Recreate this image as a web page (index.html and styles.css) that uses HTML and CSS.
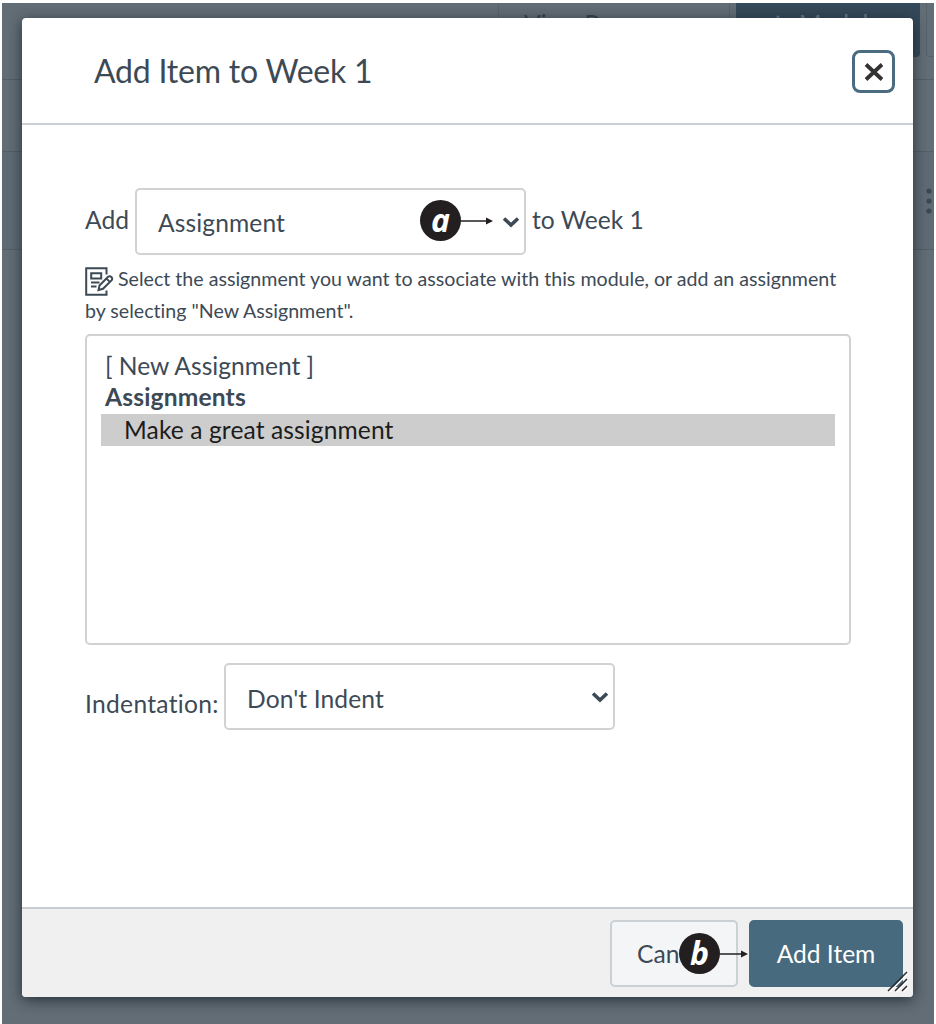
FILE: index.html
```html
<!DOCTYPE html>
<html lang="en">
<head>
    <meta charset="UTF-8">
    <meta name="viewport" content="width=device-width, initial-scale=1.0">
    <title>Add Item to Week 1</title>
    <link rel="stylesheet" href="styles.css">
</head>
<body>
    <div class="page">
        <div class="toolbar">
            <div class="page-btn view-btn">View Progress</div>
            <div class="page-btn module-btn"><span class="plus">+</span><span>Module</span></div>
            <div class="page-btn more-btn"></div>
        </div>
        <div class="page-gap"></div>
        <div class="module-row">
            <svg class="kebab" width="6" height="28" viewBox="0 0 6 28">
                <circle cx="3" cy="4" r="2.6"/>
                <circle cx="3" cy="14" r="2.6"/>
                <circle cx="3" cy="24" r="2.6"/>
            </svg>
        </div>
    </div>

    <div class="dialog" role="dialog">
        <div class="dialog-header">
            <h1>Add Item to Week 1</h1>
            <button type="button" class="close-btn" aria-label="Close">
                <svg width="20" height="20" viewBox="0 0 20 20">
                    <path d="M2 2.5 L18 17.5 M18 2.5 L2 17.5"/>
                </svg>
            </button>
        </div>

        <form class="dialog-body">
            <div class="type-row">
                <label for="item-type">Add</label>
                <div class="select-wrap">
                    <select id="item-type">
                        <option>Assignment</option>
                    </select>
                    <svg class="chevron" width="18" height="12" viewBox="0 0 18 12"><path d="M2 2.5 L9 9 L16 2.5"/></svg>
                    <div class="marker marker-a">
                        <span class="marker-dot">a</span>
                        <svg width="32" height="8" viewBox="0 0 32 8"><path d="M0 4 H26" stroke="#231f20" stroke-width="1.5"/><path d="M25 0.5 L32 4 L25 7.5 Z" fill="#231f20"/></svg>
                    </div>
                </div>
                <span class="type-suffix">to Week 1</span>
            </div>

            <p class="hint"><svg class="hint-icon" width="29" height="29" viewBox="0 0 29 29"><path d="M21.5 7.5 V1.2 H1.2 V27.8 H21.5 V23.5"/><path d="M6.2 6.2 H16.2 V11.6 H6.2 Z"/><path d="M6 15.5 H14.5 M6 19.5 H11.5"/><path d="M14.5 18.5 L23.3 9.6 Q25 8.6 26.4 10 Q27.8 11.4 26.7 13.1 L18 21.8 L13.5 23 Z M21.5 11.6 L24.8 14.9"/></svg>Select the assignment you want to associate with this module, or add an assignment<br>by selecting "New Assignment".</p>

            <ul class="item-list">
                <li>[ New Assignment ]</li>
                <li class="group">Assignments</li>
                <li class="selected">Make a great assignment</li>
            </ul>

            <div class="indent-row">
                <label for="indent">Indentation:</label>
                <div class="select-wrap">
                    <select id="indent">
                        <option>Don't Indent</option>
                    </select>
                    <svg class="chevron" width="18" height="12" viewBox="0 0 18 12"><path d="M2 2.5 L9 9 L16 2.5"/></svg>
                </div>
            </div>
        </form>

        <div class="dialog-footer">
            <button type="button" class="btn cancel-btn">Cancel</button>
            <button type="button" class="btn add-btn">Add Item</button>
            <div class="marker marker-b">
                <span class="marker-dot">b</span>
                <svg width="28" height="8" viewBox="0 0 28 8"><path d="M0 4 H22" stroke="#231f20" stroke-width="1.5"/><path d="M21 0.5 L28 4 L21 7.5 Z" fill="#231f20"/></svg>
            </div>
            <svg class="resize-handle" width="22" height="22" viewBox="0 0 22 22">
                <g stroke="#fff" transform="translate(1.2 1.2)"><path d="M1 20 L20 1 M8 20 L20 8 M15 20 L20 15"/></g>
                <g stroke="#2b2b2b"><path d="M1 20 L20 1 M8 20 L20 8 M15 20 L20 15"/></g>
            </svg>
        </div>
    </div>
</body>
</html>
```

FILE: styles.css
```css
* {
    box-sizing: border-box;
}

body {
    margin: 0;
    height: 1024px;
    overflow: hidden;
    background: #fff;
    font-family: Lato, sans-serif;
    font-size: 24.6px;
    font-variant-ligatures: none;
    color: #3d4a56;
}

/* dimmed page behind the dialog */
.page {
    height: 1021px;
    margin: 3px 2px 0;
    background: #626d76;
    overflow: hidden;
}

.toolbar {
    display: flex;
    justify-content: flex-end;
    gap: 6px;
    height: 77px;
    border-bottom: 1px solid #525e68;
}

.page-btn {
    height: 54px;
    padding-top: 6px;
    border: 1px solid #56626c;
    border-top: none;
    border-radius: 0 0 4px 4px;
    line-height: 30px;
    color: #35424d;
}

.view-btn {
    width: 232px;
    padding-left: 25px;
}

.module-btn {
    display: flex;
    align-items: flex-start;
    width: 184px;
    padding-left: 31px;
    background: #34495a;
    border-color: #34495a;
    color: #6e7c88;
}

.plus {
    margin-right: 11px;
    font-size: 34px;
    line-height: 28px;
}

.more-btn {
    width: 8px;
    border-right: none;
    border-radius: 0 0 0 4px;
}

.page-gap {
    height: 71px;
}

.module-row {
    display: flex;
    align-items: center;
    justify-content: flex-end;
    height: 99px;
    padding-right: 2px;
    border-top: 1px solid #525e68;
    border-bottom: 1px solid #525e68;
    background: #5f6b74;
}

.kebab {
    fill: #3b4853;
}

.dialog {
    position: absolute;
    top: 18px;
    left: 22px;
    display: flex;
    flex-direction: column;
    width: 891px;
    height: 979px;
    border-radius: 4px;
    background: #fff;
    box-shadow: 0 3px 14px rgba(20, 30, 38, 0.75);
}

.dialog-header {
    display: flex;
    align-items: center;
    justify-content: space-between;
    height: 107px;
    padding: 0 18px 0 72px;
    border-bottom: 2px solid #cbced3;
}

h1 {
    margin: 0;
    font-size: 32px;
    font-weight: normal;
    line-height: 40px;
    letter-spacing: -0.2px;
}

.close-btn {
    display: flex;
    align-items: center;
    justify-content: center;
    width: 43px;
    height: 43px;
    margin-top: 2px;
    padding: 0;
    border: 3px solid #4a6b80;
    border-radius: 8px;
    background: #fff;
}

.close-btn svg {
    fill: none;
    stroke: #333;
    stroke-width: 3.8;
}

.dialog-body {
    flex: 1;
    padding: 63px 62px 0 63px;
}

.type-row,
.indent-row {
    display: flex;
    align-items: center;
    height: 67px;
}

.type-row label {
    width: 50px;
    padding-bottom: 5px;
}

.select-wrap {
    position: relative;
    width: 391px;
    height: 67px;
}

select {
    appearance: none;
    width: 100%;
    height: 100%;
    padding: 1px 21px 0;
    border: 2px solid #d0d2d4;
    border-radius: 5px;
    background: #fff;
    font: inherit;
    color: inherit;
    letter-spacing: 0.1px;
}

.chevron {
    position: absolute;
    top: 28px;
    right: 6px;
    fill: none;
    stroke: #3d4a56;
    stroke-width: 3.6;
}

.type-suffix {
    padding: 0 0 5px 6px;
}

.hint {
    height: 64px;
    margin: 8px 0 7px;
    font-size: 19.63px;
    line-height: 32px;
    white-space: nowrap;
}

/* negative margins keep the icon from stretching its line */
.hint-icon {
    height: 29px;
    margin: -10px 4px -10px 0;
    vertical-align: 0;
    fill: none;
    stroke: #3d4a56;
    stroke-width: 2;
}

.item-list {
    height: 311px;
    margin: 0;
    padding: 14px 14px;
    border: 2px solid #d0d2d4;
    border-radius: 5px;
    list-style: none;
}

.item-list li {
    height: 32px;
    padding-left: 4px;
    line-height: 32px;
}

.item-list .group {
    font-weight: bold;
    line-height: 30px;
    letter-spacing: 0.15px;
}

.item-list .selected {
    padding-left: 23px;
    background: #cdcdcd;
    color: #1c1c1c;
    letter-spacing: 0.1px;
}

.indent-row {
    margin-top: 18px;
}

.indent-row label {
    width: 139px;
    padding-top: 13px;
    letter-spacing: 0.3px;
}

.indent-row select {
    padding-top: 4px;
}

.dialog-footer {
    position: relative;
    display: flex;
    justify-content: flex-end;
    gap: 11px;
    height: 90px;
    padding: 11px 10px 0;
    border-top: 2px solid #cbced0;
    border-radius: 0 0 4px 4px;
    background: #f0f0f0;
}

.btn {
    height: 67px;
    padding: 0 0 1px;
    border: 2px solid #cbd0d4;
    border-radius: 5px;
    background: #f4f5f6;
    font: inherit;
    color: inherit;
}

.cancel-btn {
    width: 128px;
    padding-left: 25px;
    text-align: left;
}

.add-btn {
    width: 154px;
    border-color: #486a7e;
    background: #486a7e;
    color: #fff;
}

/* callout markers */
.marker {
    position: absolute;
    display: flex;
    align-items: center;
}

.marker-a {
    top: 12px;
    left: 285px;
}

.marker-b {
    top: 24px;
    left: 657px;
}

.marker-dot {
    width: 41px;
    height: 41px;
    border-radius: 50%;
    background: #231f20;
    color: #fff;
    font: italic bold 32px/39px "Open Sans", sans-serif;
    text-align: center;
}

.resize-handle {
    position: absolute;
    right: 4px;
    bottom: 4px;
    fill: none;
    stroke-width: 1.5;
}
```
